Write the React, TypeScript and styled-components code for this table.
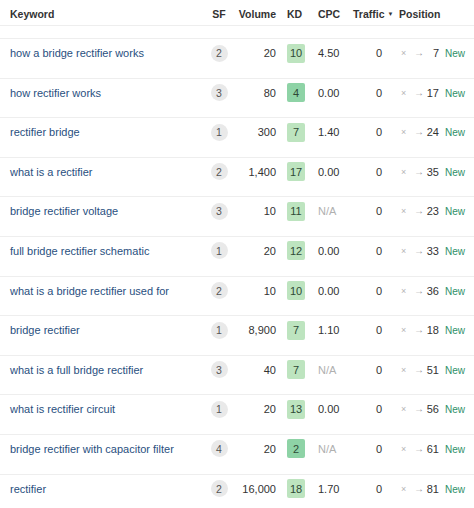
import React from "react";
import styled, { createGlobalStyle } from "styled-components";

const Global = createGlobalStyle`
  html, body { margin: 0; padding: 0; background: #fff; }
  body { font-family: "Liberation Sans", Arial, sans-serif; width: 474px; height: 508px; overflow: hidden; }
`;

const COLS = "200px 38px 38px 38px 36px 40px 84px";

const Table = styled.div`
  width: 474px;
  display: flex;
  flex-direction: column;
`;

const HeaderRow = styled.div`
  display: grid;
  grid-template-columns: ${COLS};
  height: 26px;
  align-items: center;
  padding-top: 2px;
  box-sizing: border-box;
  border-bottom: 1px solid #eeeeee;
  font-size: 10.5px;
  font-weight: 700;
  color: #333;
`;

const Spacer = styled.div`
  height: 12px;
`;

const Row = styled.div`
  display: grid;
  grid-template-columns: ${COLS};
  height: 39.6px;
  box-sizing: border-box;
  border-top: 1px solid #eeeeee;
  padding-top: 6px;
  align-items: start;
  font-size: 11px;
  color: #333;
`;

const Cell = styled.div<{ $align?: "left" | "right" | "center"; $pl?: number; $pr?: number }>`
  display: flex;
  align-items: center;
  height: 16px;
  justify-content: ${(p) => (p.$align === "right" ? "flex-end" : p.$align === "center" ? "center" : "flex-start")};
  padding-left: ${(p) => p.$pl ?? 0}px;
  padding-right: ${(p) => p.$pr ?? 0}px;
  white-space: nowrap;
  box-sizing: border-box;
`;

const Keyword = styled.span`
  color: #294f80;
  font-size: 11px;
`;

const SfBadge = styled.span`
  width: 17px;
  height: 17px;
  border-radius: 50%;
  background: #e9e9e9;
  color: #555;
  font-size: 10.5px;
  display: inline-flex;
  align-items: center;
  justify-content: center;
`;

const KdBadge = styled.span<{ $strong: boolean }>`
  width: 18px;
  height: 19px;
  border-radius: 2px;
  background: ${(p) => (p.$strong ? "#8ed3a6" : "#bde4bf")};
  color: #2f4a36;
  font-size: 11px;
  display: inline-flex;
  align-items: center;
  justify-content: center;
`;

const Muted = styled.span`
  color: #b0b0b0;
`;

const Caret = styled.span`
  font-size: 6px;
  margin-left: 3px;
`;

const Pos = styled.div`
  display: flex;
  align-items: baseline;
  height: 16px;
  line-height: 16px;
  padding-left: 11px;
  white-space: nowrap;
`;

const Cross = styled.span`
  color: #b5b5b5;
  font-size: 9px;
  width: 13px;
  transform: translateY(-1px);
`;

const Arrow = styled.span`
  color: #9a9a9a;
  font-size: 10px;
  width: 10px;
  transform: translateY(-1px);
`;

const PosNum = styled.span`
  width: 15px;
  text-align: right;
  color: #333;
`;

const NewTag = styled.span`
  color: #2f8f68;
  font-size: 10px;
  margin-left: 6px;
`;

type R = { k: string; sf: number; vol: string; kd: number; cpc: string; pos: number };

const rows: R[] = [
  { k: "how a bridge rectifier works", sf: 2, vol: "20", kd: 10, cpc: "4.50", pos: 7 },
  { k: "how rectifier works", sf: 3, vol: "80", kd: 4, cpc: "0.00", pos: 17 },
  { k: "rectifier bridge", sf: 1, vol: "300", kd: 7, cpc: "1.40", pos: 24 },
  { k: "what is a rectifier", sf: 2, vol: "1,400", kd: 17, cpc: "0.00", pos: 35 },
  { k: "bridge rectifier voltage", sf: 3, vol: "10", kd: 11, cpc: "N/A", pos: 23 },
  { k: "full bridge rectifier schematic", sf: 1, vol: "20", kd: 12, cpc: "0.00", pos: 33 },
  { k: "what is a bridge rectifier used for", sf: 2, vol: "10", kd: 10, cpc: "0.00", pos: 36 },
  { k: "bridge rectifier", sf: 1, vol: "8,900", kd: 7, cpc: "1.10", pos: 18 },
  { k: "what is a full bridge rectifier", sf: 3, vol: "40", kd: 7, cpc: "N/A", pos: 51 },
  { k: "what is rectifier circuit", sf: 1, vol: "20", kd: 13, cpc: "0.00", pos: 56 },
  { k: "bridge rectifier with capacitor filter", sf: 4, vol: "20", kd: 2, cpc: "N/A", pos: 61 },
  { k: "rectifier", sf: 2, vol: "16,000", kd: 18, cpc: "1.70", pos: 81 },
];

export default function App() {
  return (
    <>
      <Global />
      <Table>
        <HeaderRow>
          <Cell $pl={10}>Keyword</Cell>
          <Cell $align="center">SF</Cell>
          <Cell $align="right">Volume</Cell>
          <Cell $pl={11}>KD</Cell>
          <Cell $pl={4}>CPC</Cell>
          <Cell $pl={3}>
            Traffic<Caret>▼</Caret>
          </Cell>
          <Cell $pl={9}>Position</Cell>
        </HeaderRow>
        <Spacer />
        {rows.map((r) => (
          <Row key={r.k}>
            <Cell $pl={10}>
              <Keyword>{r.k}</Keyword>
            </Cell>
            <Cell $align="center">
              <SfBadge>{r.sf}</SfBadge>
            </Cell>
            <Cell $align="right">{r.vol}</Cell>
            <Cell $pl={11}>
              <KdBadge $strong={r.kd <= 5}>{r.kd}</KdBadge>
            </Cell>
            <Cell $pl={4}>{r.cpc === "N/A" ? <Muted>{r.cpc}</Muted> : r.cpc}</Cell>
            <Cell $align="right" $pr={8}>
              0
            </Cell>
            <Pos>
              <Cross>×</Cross>
              <Arrow>→</Arrow>
              <PosNum>{r.pos}</PosNum>
              <NewTag>New</NewTag>
            </Pos>
          </Row>
        ))}
      </Table>
    </>
  );
}
